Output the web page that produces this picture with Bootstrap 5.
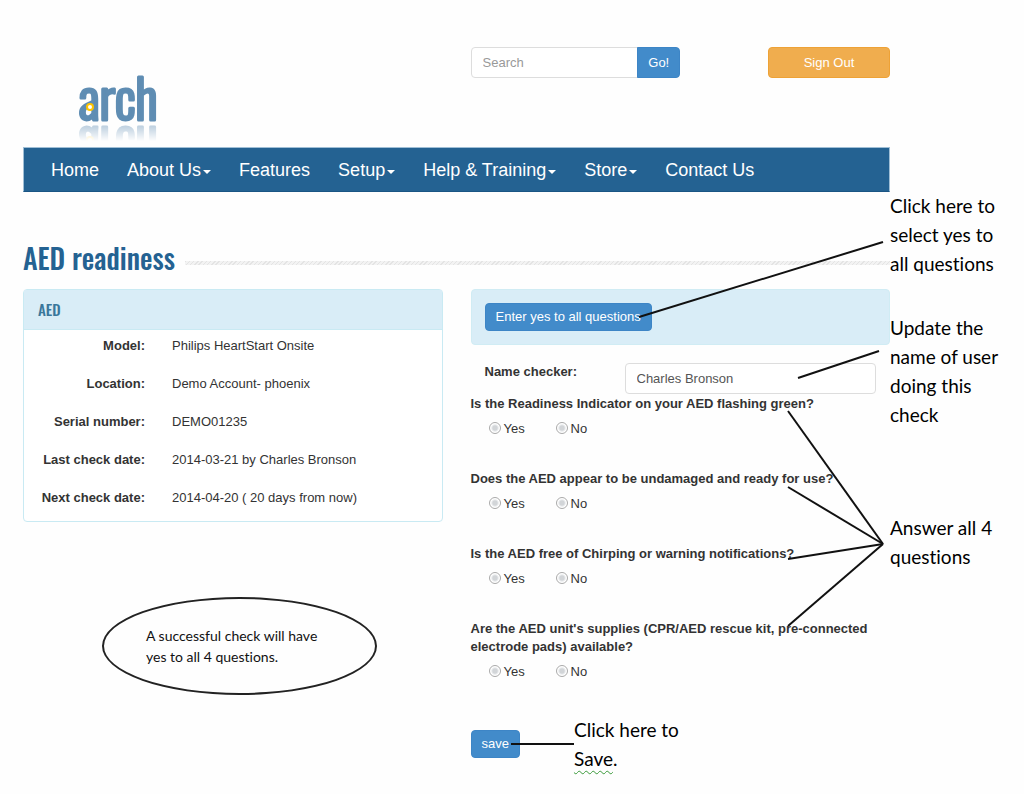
<!DOCTYPE html>
<html lang="en">
<head>
<meta charset="utf-8">
<meta name="viewport" content="width=device-width, initial-scale=1">
<title>AED readiness</title>
<link href="https://cdn.jsdelivr.net/npm/bootstrap@5.3.0/dist/css/bootstrap.min.css" rel="stylesheet">
<style>
  body { font-family: "Liberation Sans", Arial, sans-serif; font-size: 13px; line-height: 18px; color: #333; background: #fefefe; }
  .sheet { padding-left: 23px; }
  .halves { --bs-gutter-x: 28px; }
  .btn, .form-control { font-size: 13px; line-height: 18px; border-radius: 4px; }
  .btn { padding: 4px 10px; }
  .form-control { padding: 5px 11px; height: 31px; color: #555; border-color: #ddd; }
  .form-control::placeholder { color: #999; }
  .btn-primary { --bs-btn-bg: #428bca; --bs-btn-border-color: #3d85c6; }
  .btn-warning { --bs-btn-bg: #f0ad4e; --bs-btn-border-color: #eea236; --bs-btn-color: #fff; width: 122px; height: 31px; }
  .top-area { height: 147px; padding-top: 47px; }
  .brand { display: block; width: 96px; margin: 8px 0 0 52px; -webkit-box-reflect: below -27px linear-gradient(transparent 62%, rgba(0,0,0,.6) 90%); }
  .brand text { font-family: Oswald, "Liberation Sans", sans-serif; font-size: 53px; font-weight: 300; fill: #5f8db3; stroke: #5f8db3; stroke-width: 3px; stroke-linejoin: round; }
  .main-nav { background: #246292; border: 1px solid #a0bfd6; border-bottom-color: #1a5584; padding: 0 13px; height: 45px; }
  .main-nav .nav-link { color: #fff; font-size: 18px; line-height: 27px; padding: 9px 14px 7px; white-space: nowrap; }
  .main-nav .dropdown-toggle::after { margin-left: 2px; border-width: 4px 4px 0; vertical-align: 2px; }
  .page-title { margin: 46px 0 12px; gap: 10px; }
  .page-title h1, .info-head h2 { font-family: Oswald, "Roboto Condensed", Roboto, sans-serif; font-weight: 500; }
  .page-title h1 { font-size: 28px; line-height: 39px; color: #246292; }
  .stripe { height: 4px; margin-top: 10px; background: repeating-linear-gradient(135deg, #e4e4e4 0 1px, #f3f3f3 1px 3px); }
  .info-panel { border: 1px solid #c9eaf3; border-radius: 4px; background: #fff; }
  .info-head { background: #d9edf7; border-bottom: 1px solid #c9eaf3; padding: 9px 14px 11px; height: 40px; }
  .info-head h2 { font-size: 15px; line-height: 20px; color: #3a779b; }
  .facts { display: grid; grid-template-columns: 121px 1fr; column-gap: 27px; row-gap: 20px; padding: 7px 0 14px; }
  .facts dd { margin: 0; }
  .bubble { width: 275px; height: 98px; margin: 75px 0 0 79px; border: 2px solid #222; border-radius: 50%; padding-left: 42px; color: #111; font: 14px/21px Lato, sans-serif; font-variant-ligatures: none; }
  .yes-bar { background: #d9edf7; border: 1px solid #d0ecf4; border-radius: 4px; padding: 13px; height: 56px; }
  .checker { padding: 18px 14px 1px; }
  .checker label { width: 140px; font-weight: 700; }
  .question { margin-bottom: 31px; }
  .question legend { font-size: 13px; line-height: 18px; font-weight: 700; margin: 0 0 6px; }
  .question .choices { padding-left: 18px; height: 20px; }
  .question .choices label { width: 67px; display: flex; align-items: center; gap: 3px; }
  .question input { appearance: none; width: 12px; height: 12px; margin: 0 0 2px; border: 1px solid #aaa; border-radius: 50%; background: radial-gradient(circle, #d2d5d8 0 30%, #e8eaec 45%, #fff 60%); }
  .question input:checked { background: radial-gradient(circle, #246292 0 40%, #fff 50%); }
  .save-row { gap: 54px; margin-top: 33px; }
  .note { color: #000; font: 19px/29px Lato, sans-serif; font-variant-ligatures: none; }
  .notes { width: 134px; padding: 191px 16px 0 0; }
  .notes .second { margin-top: 35px; }
  .notes .third { margin-top: 84px; }
  .wavy { text-decoration: underline wavy #3a9a3a 1px; text-underline-offset: 4px; }
  .pointers { stroke: #111; stroke-width: 2px; pointer-events: none; }
  .pointers line { vector-effect: non-scaling-stroke; }
</style>
</head>
<body>
<div class="sheet position-relative d-flex min-vh-100">
  <div class="flex-grow-1">
    <header class="top-area">
      <div class="row halves">
        <div class="col-6">
          <a href="#" class="brand" aria-label="arch">
            <svg width="96" height="82" viewBox="0 0 96 82" class="d-block">
              <text x="4" y="65">arch</text>
              <circle cx="15" cy="52" r="3" fill="#fff" stroke="#fdc300" stroke-width="2"/>
            </svg>
          </a>
        </div>
        <div class="col-6 d-flex justify-content-between align-items-start">
          <form class="input-group w-50 flex-nowrap">
            <input type="search" class="form-control" placeholder="Search" aria-label="Search">
            <button type="button" class="btn btn-primary">Go!</button>
          </form>
          <button type="button" class="btn btn-warning">Sign Out</button>
        </div>
      </div>
    </header>

    <nav class="main-nav d-flex">
      <a class="nav-link" href="#">Home</a>
      <a class="nav-link dropdown-toggle" href="#">About Us</a>
      <a class="nav-link" href="#">Features</a>
      <a class="nav-link dropdown-toggle" href="#">Setup</a>
      <a class="nav-link dropdown-toggle" href="#">Help &amp; Training</a>
      <a class="nav-link dropdown-toggle" href="#">Store</a>
      <a class="nav-link" href="#">Contact Us</a>
    </nav>

    <div class="page-title d-flex align-items-center">
      <h1 class="m-0">AED readiness</h1>
      <div class="stripe flex-grow-1"></div>
    </div>

    <main class="row halves">
      <div class="col-6">
        <section class="info-panel">
          <div class="info-head"><h2 class="m-0">AED</h2></div>
          <dl class="facts m-0">
            <dt class="text-end">Model:</dt><dd>Philips HeartStart Onsite</dd>
            <dt class="text-end">Location:</dt><dd>Demo Account- phoenix</dd>
            <dt class="text-end">Serial number:</dt><dd>DEMO01235</dd>
            <dt class="text-end">Last check date:</dt><dd>2014-03-21 by Charles Bronson</dd>
            <dt class="text-end">Next check date:</dt><dd>2014-04-20 ( 20 days from now)</dd>
          </dl>
        </section>
        <div class="bubble d-flex align-items-center">A successful check will have<br>yes to all 4 questions.</div>
      </div>

      <form class="col-6">
        <div class="yes-bar"><button type="button" class="btn btn-primary">Enter yes to all questions</button></div>
        <div class="checker d-flex">
          <label for="checker">Name checker:</label>
          <input id="checker" type="text" class="form-control flex-grow-1 w-auto" value="Charles Bronson">
        </div>
        <fieldset class="question">
          <legend>Is the Readiness Indicator on your AED flashing green?</legend>
          <div class="choices d-flex">
            <label><input type="radio" name="q1"> Yes</label>
            <label><input type="radio" name="q1"> No</label>
          </div>
        </fieldset>
        <fieldset class="question">
          <legend>Does the AED appear to be undamaged and ready for use?</legend>
          <div class="choices d-flex">
            <label><input type="radio" name="q2"> Yes</label>
            <label><input type="radio" name="q2"> No</label>
          </div>
        </fieldset>
        <fieldset class="question">
          <legend>Is the AED free of Chirping or warning notifications?</legend>
          <div class="choices d-flex">
            <label><input type="radio" name="q3"> Yes</label>
            <label><input type="radio" name="q3"> No</label>
          </div>
        </fieldset>
        <fieldset class="question mb-0">
          <legend>Are the AED unit's supplies (CPR/AED rescue kit, pre-connected electrode pads) available?</legend>
          <div class="choices d-flex">
            <label><input type="radio" name="q4"> Yes</label>
            <label><input type="radio" name="q4"> No</label>
          </div>
        </fieldset>
        <div class="save-row d-flex align-items-center">
          <button type="button" class="btn btn-primary">save</button>
          <div class="note">Click here to<br><span class="wavy">Save</span>.</div>
        </div>
      </form>
    </main>
  </div>

  <aside class="notes flex-shrink-0">
    <p class="note m-0">Click here to select yes to all questions</p>
    <p class="note mb-0 second">Update the name of user doing this check</p>
    <p class="note mb-0 third">Answer all 4 questions</p>
  </aside>

  <!-- Lines from each note to the control it explains -->
  <svg class="pointers position-absolute top-0 start-0 w-100 h-100" viewBox="0 0 1024 794" preserveAspectRatio="none" aria-hidden="true">
    <line x1="639" y1="317" x2="883" y2="242"/>
    <line x1="798" y1="378" x2="879" y2="351"/>
    <line x1="788" y1="411" x2="883" y2="544"/>
    <line x1="788" y1="487" x2="883" y2="544"/>
    <line x1="788" y1="559" x2="883" y2="544"/>
    <line x1="788" y1="626" x2="883" y2="544"/>
    <line x1="511" y1="744" x2="574" y2="744"/>
  </svg>
</div>
<script src="https://cdn.jsdelivr.net/npm/bootstrap@5.3.0/dist/js/bootstrap.bundle.min.js"></script>
</body>
</html>
